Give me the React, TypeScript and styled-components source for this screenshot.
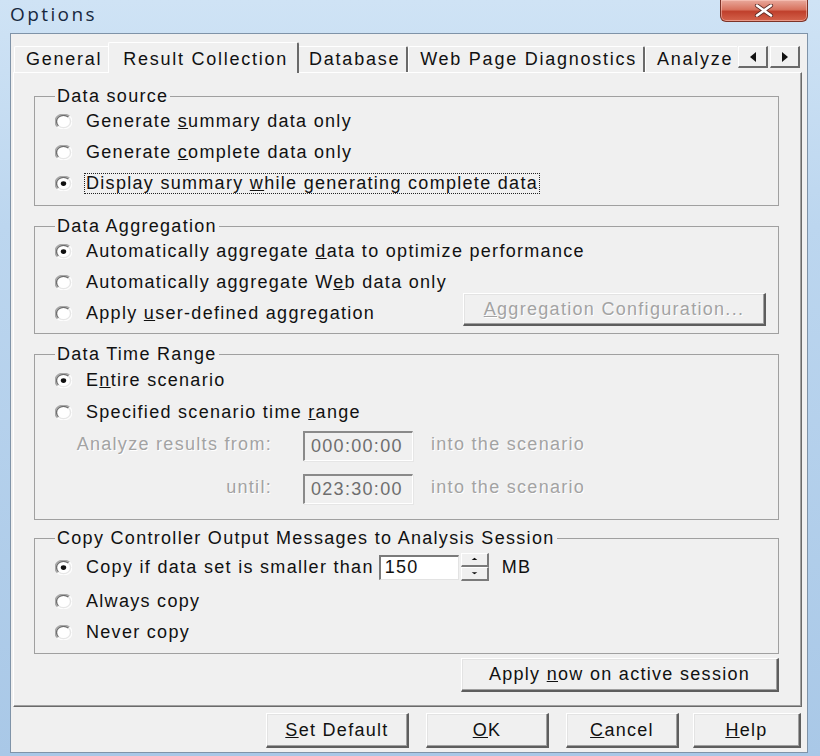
import type { ReactNode } from 'react';
import styled, { createGlobalStyle } from 'styled-components';

const GlobalStyle = createGlobalStyle`
  html, body { margin: 0; padding: 0; }
  body {
    background: #a9c9e8;
    font-family: "Liberation Sans", Arial, sans-serif;
  }
  * { box-sizing: border-box; }
`;

const Window = styled.div`
  width: 820px;
  height: 756px;
  display: flex;
  flex-direction: column;
  overflow: hidden;
  background: linear-gradient(180deg, #cfe3f5 0%, #bcd6ef 30%, #a9c8e7 100%);
`;

const TitleBar = styled.div`
  flex: none;
  height: 33px;
  display: flex;
  justify-content: space-between;
  align-items: flex-start;
`;

const Title = styled.div`
  padding: 2px 0 0 10px;
  font-family: "Open Sans", "Liberation Sans", sans-serif;
  font-size: 19px;
  line-height: 24px;
  letter-spacing: 2.4px;
  color: #17283f;
`;

const CloseButton = styled.div`
  width: 88px;
  height: 22px;
  margin-right: 12px;
  display: flex;
  align-items: center;
  justify-content: center;
  border: 1px solid #7c3328;
  border-top: none;
  border-radius: 0 0 6px 6px;
  background: linear-gradient(180deg, #e9a99c 0%, #d8735f 45%, #c0402c 55%, #d4634c 100%);
  box-shadow: inset 0 0 0 1px rgba(255, 210, 200, 0.5);
`;

const Client = styled.div`
  flex: 1;
  margin: 0 12px 3px 10px;
  padding: 8px 5px 4px 2px;
  display: flex;
  flex-direction: column;
  background: #f0f0f0;
  border: 1px solid #7f93a8;
  font-size: 18px;
  letter-spacing: 1.3px;
  color: #111;
`;

const TabStrip = styled.div`
  flex: none;
  height: 30px;
  display: flex;
  position: relative;
  z-index: 1;
`;

const TabViewport = styled.div`
  flex: 1;
  min-width: 0;
  height: 31px;
  display: flex;
  align-items: flex-end;
  overflow: hidden;
  padding-left: 1px;
`;

const Tab = styled.div<{ $active?: boolean }>`
  flex: none;
  height: ${({ $active }) => ($active ? '31px' : '26px')};
  margin: ${({ $active }) => ($active ? '0 -2px 0 -2px' : '0 0 1px 0')};
  padding: ${({ $active }) => ($active ? '2px 9px 0 14px' : '0 6px 0 11px')};
  display: flex;
  align-items: center;
  white-space: nowrap;
  letter-spacing: 1.75px;
  background: #f0f0f0;
  border-left: 1px solid #fff;
  border-top: 1px solid #fff;
  border-right: 2px solid #6a6a6a;
  border-radius: 2px 2px 0 0;
  position: relative;
  z-index: ${({ $active }) => ($active ? 2 : 1)};
`;

const ArrowGroup = styled.div`
  flex: none;
  display: flex;
  gap: 2px;
  margin: 4px 2px 0 1px;
`;

const ArrowButton = styled.div`
  width: 30px;
  height: 22px;
  display: flex;
  align-items: center;
  justify-content: center;
  background: #f0f0f0;
  border-style: solid;
  border-width: 1px 2px 2px 1px;
  border-color: #fff #6a6a6a #6a6a6a #fff;
`;

const Panel = styled.div`
  flex: 1;
  display: flex;
  flex-direction: column;
  padding: 13px 22px 0 20px;
  border-style: solid;
  border-width: 1px;
  border-color: #fff #6a6a6a #6a6a6a #fff;
  box-shadow: inset -1px -1px 0 #a0a0a0;
`;

const Group = styled.fieldset<{ $pb: number; $mt: number }>`
  margin: ${({ $mt }) => $mt}px 0 0 0;
  padding: 0 0 ${({ $pb }) => $pb}px 20px;
  border: 1px solid #a0a0a0;
  min-width: 0;
`;

const Legend = styled.legend`
  padding: 0 2px;
  line-height: 20px;
`;

const Row = styled.div<{ $h?: number }>`
  height: ${({ $h }) => $h ?? 31}px;
  display: flex;
  align-items: center;
`;

const Label = styled.span<{ $focused?: boolean }>`
  margin-left: 12px;
  padding: 0 1px;
  line-height: 19px;
  white-space: nowrap;
  border: 1px ${({ $focused }) => ($focused ? 'dotted #222' : 'solid transparent')};
`;

const RadioMark = styled.svg`
  flex: none;
  width: 17px;
  height: 15px;
`;

const PushButton = styled.div<{ $w: number; $h?: number; $disabled?: boolean }>`
  flex: none;
  width: ${({ $w }) => $w}px;
  height: ${({ $h }) => $h ?? 35}px;
  display: flex;
  align-items: center;
  justify-content: center;
  white-space: nowrap;
  background: #f0f0f0;
  border-style: solid;
  border-width: 1px 2px 2px 1px;
  border-color: #fff #5e5e5e #5e5e5e #fff;
  box-shadow: inset -1px -1px 0 #a0a0a0, inset 1px 1px 0 #e3e3e3;
  color: ${({ $disabled }) => ($disabled ? '#a3a3a3' : '#111')};
  text-shadow: ${({ $disabled }) => ($disabled ? '1px 1px 0 #fff' : 'none')};
`;

const ConfigButton = styled(PushButton)`
  margin: -8px 12px 0 auto;
`;

const ApplyRow = styled.div`
  display: flex;
  justify-content: flex-end;
  margin: 4px 0 0 0;
`;

const TimeRows = styled.div`
  display: flex;
  flex-direction: column;
  gap: 13px;
  margin-top: 3px;
`;

const TimeRow = styled.div`
  height: 30px;
  display: flex;
  align-items: center;
`;

const DisabledText = styled.span<{ $w?: number; $ml?: number }>`
  width: ${({ $w }) => ($w ? `${$w}px` : 'auto')};
  margin-left: ${({ $ml }) => $ml ?? 0}px;
  margin-top: -4px;
  text-align: right;
  white-space: nowrap;
  color: #a3a3a3;
  text-shadow: 1px 1px 0 #fff;
`;

const TimeBox = styled.div`
  width: 110px;
  height: 30px;
  margin-left: 31px;
  padding-left: 6px;
  display: flex;
  align-items: center;
  color: #6e6e6e;
  background: #f0f0f0;
  border-style: solid;
  border-width: 2px 1px 1px 2px;
  border-color: #8a8a8a #fff #fff #8a8a8a;
  box-shadow: 1px 1px 0 #e6e6e6;
`;

const NumberBox = styled.div`
  width: 80px;
  height: 25px;
  margin-left: 3px;
  padding-left: 4px;
  display: flex;
  align-items: center;
  background: #fff;
  border-style: solid;
  border-width: 2px 1px 1px 2px;
  border-color: #7a7a7a #e3e3e3 #e3e3e3 #7a7a7a;
`;

const Spinner = styled.div`
  width: 28px;
  height: 28px;
  margin-left: 2px;
  display: flex;
  flex-direction: column;
`;

const SpinHalf = styled.div`
  flex: 1;
  display: flex;
  align-items: center;
  justify-content: center;
  background: #f0f0f0;
  border-style: solid;
  border-width: 1px 2px 2px 1px;
  border-color: #fff #7a7a7a #7a7a7a #fff;
`;

const Unit = styled.span`
  margin-left: 13px;
`;

const ButtonBar = styled.div`
  flex: none;
  display: flex;
  justify-content: flex-end;
  gap: 17px;
  margin: 6px 1px 0 0;
`;

function Radio({ checked }: { checked?: boolean }) {
  return (
    <RadioMark viewBox="0 0 12 12" preserveAspectRatio="none">
      <circle cx="6" cy="6" r="5.4" fill="#fff" />
      <path d="M10.2 1.8A5.9 5.9 0 0 0 1.8 10.2" fill="none" stroke="#a8a8a8" strokeWidth="1" />
      <path d="M1.8 10.2A5.9 5.9 0 0 0 10.2 1.8" fill="none" stroke="#fdfdfd" strokeWidth="1" />
      <path d="M9.5 2.5A4.9 4.9 0 0 0 2.5 9.5" fill="none" stroke="#6e6e6e" strokeWidth="1" />
      <path d="M2.5 9.5A4.9 4.9 0 0 0 9.5 2.5" fill="none" stroke="#e6e6e6" strokeWidth="1" />
      {checked && <circle cx="6" cy="6" r="1.9" fill="#111" />}
    </RadioMark>
  );
}

function Option({ checked, focused, children }: { checked?: boolean; focused?: boolean; children: ReactNode }) {
  return (
    <>
      <Radio checked={checked} />
      <Label $focused={focused}>{children}</Label>
    </>
  );
}

function Triangle({ dir }: { dir: 'left' | 'right' | 'up' | 'down' }) {
  const pts = {
    left: '8,1 8,11 2,6',
    right: '2,1 2,11 8,6',
    up: '5,2 9,7 1,7',
    down: '1,3 9,3 5,8',
  }[dir];
  const small = dir === 'up' || dir === 'down';
  return (
    <svg width={small ? 7 : 10} height={small ? 5 : 12} viewBox="0 0 10 12" preserveAspectRatio="none">
      <polygon points={pts} fill="#111" />
    </svg>
  );
}

export default function App() {
  return (
    <>
      <GlobalStyle />
      <Window>
        <TitleBar>
          <Title>Options</Title>
          <CloseButton>
            <svg width="22" height="13" viewBox="0 0 22 13">
              <path d="M4 1.5L18 11.5M18 1.5L4 11.5" stroke="#5a2a24" strokeWidth="4.2" strokeLinecap="round" />
              <path d="M4 1.5L18 11.5M18 1.5L4 11.5" stroke="#fff" strokeWidth="2.6" strokeLinecap="round" />
            </svg>
          </CloseButton>
        </TitleBar>

        <Client>
          <TabStrip>
            <TabViewport>
              <Tab>General</Tab>
              <Tab $active>Result Collection</Tab>
              <Tab>Database</Tab>
              <Tab>Web Page Diagnostics</Tab>
              <Tab>Analyze</Tab>
            </TabViewport>
            <ArrowGroup>
              <ArrowButton><Triangle dir="left" /></ArrowButton>
              <ArrowButton><Triangle dir="right" /></ArrowButton>
            </ArrowGroup>
          </TabStrip>

          <Panel>
            <Group $mt={0} $pb={6}>
              <Legend>Data source</Legend>
              <Row><Option>Generate <u>s</u>ummary data only</Option></Row>
              <Row><Option>Generate <u>c</u>omplete data only</Option></Row>
              <Row>
                <Option checked focused>Display summary <u>w</u>hile generating complete data</Option>
              </Row>
            </Group>

            <Group $mt={10} $pb={4}>
              <Legend>Data Aggregation</Legend>
              <Row><Option checked>Automatically aggregate <u>d</u>ata to optimize performance</Option></Row>
              <Row><Option>Automatically aggregate W<u>e</u>b data only</Option></Row>
              <Row>
                <Option>Apply <u>u</u>ser-defined aggregation</Option>
                <ConfigButton $w={303} $h={33} $disabled>
                  <span><u>A</u>ggregation Configuration...</span>
                </ConfigButton>
              </Row>
            </Group>

            <Group $mt={10} $pb={15}>
              <Legend>Data Time Range</Legend>
              <Row $h={33}><Option checked>E<u>n</u>tire scenario</Option></Row>
              <Row><Option>Specified scenario time <u>r</u>ange</Option></Row>
              <TimeRows>
                <TimeRow>
                  <DisabledText $w={217}>Analyze results from:</DisabledText>
                  <TimeBox>000:00:00</TimeBox>
                  <DisabledText $ml={18}>into the scenario</DisabledText>
                </TimeRow>
                <TimeRow>
                  <DisabledText $w={217}>until:</DisabledText>
                  <TimeBox>023:30:00</TimeBox>
                  <DisabledText $ml={18}>into the scenario</DisabledText>
                </TimeRow>
              </TimeRows>
            </Group>

            <Group $mt={8} $pb={5}>
              <Legend>Copy Controller Output Messages to Analysis Session</Legend>
              <Row $h={38}>
                <Option checked>Copy if data set is smaller than</Option>
                <NumberBox>150</NumberBox>
                <Spinner>
                  <SpinHalf><Triangle dir="up" /></SpinHalf>
                  <SpinHalf><Triangle dir="down" /></SpinHalf>
                </Spinner>
                <Unit>MB</Unit>
              </Row>
              <Row><Option>Always copy</Option></Row>
              <Row><Option>Never copy</Option></Row>
            </Group>

            <ApplyRow>
              <PushButton $w={318} $h={34}>
                <span>Apply <u>n</u>ow on active session</span>
              </PushButton>
            </ApplyRow>
          </Panel>

          <ButtonBar>
            <PushButton $w={143}><span><u>S</u>et Default</span></PushButton>
            <PushButton $w={123}><span><u>O</u>K</span></PushButton>
            <PushButton $w={113} style={{ marginRight: -3 }}><span><u>C</u>ancel</span></PushButton>
            <PushButton $w={108}><span><u>H</u>elp</span></PushButton>
          </ButtonBar>
        </Client>
      </Window>
    </>
  );
}
